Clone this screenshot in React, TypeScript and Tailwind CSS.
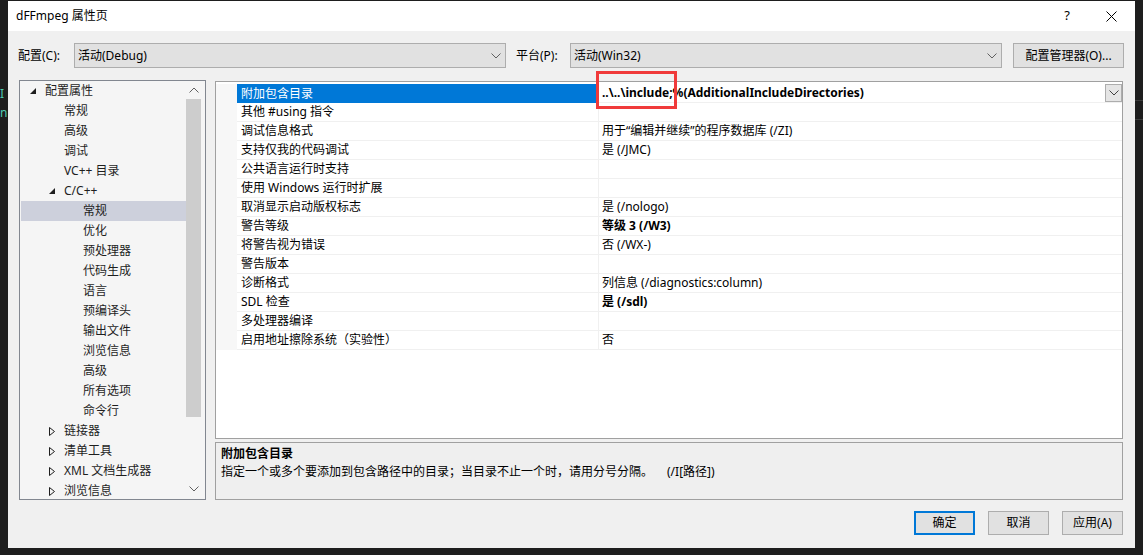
import React from "react";

const font = "font-['Noto_Sans','Noto_Sans_CJK_SC',sans-serif]";

type TreeItem = { t: string; lvl: 0 | 1 | 2; tri?: "open" | "closed"; sel?: boolean };

const tree: TreeItem[] = [
  { t: "配置属性", lvl: 0, tri: "open" },
  { t: "常规", lvl: 1 },
  { t: "高级", lvl: 1 },
  { t: "调试", lvl: 1 },
  { t: "VC++ 目录", lvl: 1 },
  { t: "C/C++", lvl: 1, tri: "open" },
  { t: "常规", lvl: 2, sel: true },
  { t: "优化", lvl: 2 },
  { t: "预处理器", lvl: 2 },
  { t: "代码生成", lvl: 2 },
  { t: "语言", lvl: 2 },
  { t: "预编译头", lvl: 2 },
  { t: "输出文件", lvl: 2 },
  { t: "浏览信息", lvl: 2 },
  { t: "高级", lvl: 2 },
  { t: "所有选项", lvl: 2 },
  { t: "命令行", lvl: 2 },
  { t: "链接器", lvl: 1, tri: "closed" },
  { t: "清单工具", lvl: 1, tri: "closed" },
  { t: "XML 文档生成器", lvl: 1, tri: "closed" },
  { t: "浏览信息", lvl: 1, tri: "closed" },
];

const indent = ["pl-[10px]", "pl-[29px]", "pl-[48px]"];

type Prop = { name: string; value: string; bold?: boolean; sel?: boolean };

const props: Prop[] = [
  { name: "附加包含目录", value: "..\\..\\include;%(AdditionalIncludeDirectories)", bold: true, sel: true },
  { name: "其他 #using 指令", value: "" },
  { name: "调试信息格式", value: "用于“编辑并继续”的程序数据库 (/ZI)" },
  { name: "支持仅我的代码调试", value: "是 (/JMC)" },
  { name: "公共语言运行时支持", value: "" },
  { name: "使用 Windows 运行时扩展", value: "" },
  { name: "取消显示启动版权标志", value: "是 (/nologo)" },
  { name: "警告等级", value: "等级 3 (/W3)", bold: true },
  { name: "将警告视为错误", value: "否 (/WX-)" },
  { name: "警告版本", value: "" },
  { name: "诊断格式", value: "列信息 (/diagnostics:column)" },
  { name: "SDL 检查", value: "是 (/sdl)", bold: true },
  { name: "多处理器编译", value: "" },
  { name: "启用地址擦除系统（实验性）", value: "否" },
];

const Chevron = ({ className = "" }: { className?: string }) => (
  <svg width="10" height="6" viewBox="0 0 10 6" className={className}>
    <path d="M0.5 0.5 L5 5 L9.5 0.5" fill="none" stroke="currentColor" strokeWidth="1" />
  </svg>
);

const Triangle = ({ kind }: { kind?: "open" | "closed" }) => {
  if (kind === "open")
    return (
      <svg width="6" height="6" viewBox="0 0 6 6">
        <path d="M6 0 L6 6 L0 6 Z" fill="#1e1e1e" />
      </svg>
    );
  if (kind === "closed")
    return (
      <svg width="6" height="9" viewBox="0 0 6 9">
        <path d="M0.5 0.5 L5.5 4.5 L0.5 8.5 Z" fill="none" stroke="#1e1e1e" strokeWidth="1" />
      </svg>
    );
  return null;
};

const Select = ({ text, w }: { text: string; w: string }) => (
  <div className={`${w} h-[25px] flex items-center justify-between bg-[#e1e1e1] border border-[#adadad] pl-[3px] pr-[4px]`}>
    <span className="text-[12px] text-black">{text}</span>
    <Chevron className="text-[#606060]" />
  </div>
);

const Button = ({ label, primary }: { label: string; primary?: boolean }) => (
  <div
    className={`w-[61px] h-[24px] flex items-center justify-center bg-[#e1e1e1] text-[12px] text-black ${
      primary ? "border-2 border-[#0078d7]" : "border border-[#adadad]"
    }`}
  >
    {label}
  </div>
);

export default function App() {
  return (
    <div className={`w-[1143px] h-[555px] bg-[#1e1e1e] flex overflow-hidden ${font}`}>
      {/* editor behind the dialog */}
      <div className="w-[8px] flex flex-col pt-[84px] text-[12px] leading-[19px] text-[#4ec9b0] overflow-hidden">
        <span>I</span>
        <span>n</span>
      </div>

      <div className="w-[1127px] h-[547px] mt-[1px] flex flex-col bg-[#f0f0f0] relative">
        {/* title bar */}
        <div className="h-[30px] bg-white flex items-center pl-[8px] pr-[18px]">
          <span className="text-[12px] text-black">dFFmpeg 属性页</span>
          <span className="ml-auto text-[13px] text-black mr-[36px]">?</span>
          <svg width="11" height="11" viewBox="0 0 11 11">
            <path d="M0.5 0.5 L10.5 10.5 M10.5 0.5 L0.5 10.5" stroke="#000" strokeWidth="1" />
          </svg>
        </div>

        {/* config row */}
        <div className="flex items-center mt-[12px] pl-[10px] h-[25px]">
          <span className="text-[12px] text-black w-[56px]">配置(C):</span>
          <Select text="活动(Debug)" w="w-[432px]" />
          <span className="text-[12px] text-black ml-[10px] w-[54px]">平台(P):</span>
          <Select text="活动(Win32)" w="w-[432px]" />
          <div className="ml-[11px] w-[111px] h-[25px] flex items-center justify-center bg-[#e1e1e1] border border-[#adadad] text-[12px] text-black">
            配置管理器(O)...
          </div>
        </div>

        {/* main area */}
        <div className="flex mt-[12px] pl-[11px] h-[421px]">
          {/* tree */}
          <div className="w-[187px] h-[420px] border border-[#828790] bg-[#f5f5f5] flex overflow-hidden">
            <div className="w-[166px] flex flex-col">
              {tree.map((it, i) => (
                <div
                  key={i}
                  className={`h-[20px] shrink-0 flex items-center ${indent[it.lvl]} ${
                    it.sel ? "bg-[#cdd0dc] ml-[1px]" : ""
                  }`}
                >
                  <div className={`${it.sel ? "w-[14px]" : "w-[15px]"} flex items-center`}>
                    <Triangle kind={it.tri} />
                  </div>
                  <span className="text-[12px] text-[#1e1e1e] whitespace-nowrap">{it.t}</span>
                </div>
              ))}
            </div>
            <div className="w-[15px] flex flex-col items-center">
              <div className="h-[18px] flex items-center justify-center text-[#606060]">
                <Chevron className="rotate-180" />
              </div>
              <div className="w-[15px] h-[318px] bg-[#cdcdcd]" />
              <div className="flex-1" />
              <div className="h-[18px] flex items-center justify-center text-[#606060] mb-[1px]">
                <Chevron />
              </div>
            </div>
          </div>

          {/* right column */}
          <div className="ml-[9px] w-[908px] flex flex-col">
            <div className="h-[358px] mt-[1px] border border-[#a0a0a0] bg-white pt-[2px]">
              {props.map((p, i) => (
                <div key={i} className="h-[19px] flex">
                  <div className="w-[21px] bg-[#f7f7f7]" />
                  <div
                    className={`w-[361px] flex items-center pl-[4px] text-[12px] whitespace-nowrap ${
                      p.sel ? "bg-[#0078d7] text-white" : "border-b border-[#f0f0f0] text-black"
                    }`}
                  >
                    {p.name}
                  </div>
                  <div className="flex-1 flex items-center border-l border-b border-[#f0f0f0] pl-[3px]">
                    <span className={`text-[12px] text-black whitespace-nowrap ${p.bold ? "font-bold" : ""}`}>
                      {p.value}
                    </span>
                    {p.sel && (
                      <div className="ml-auto w-[17px] h-[18px] bg-[#e5e5e5] border border-[#adadad] flex items-center justify-center text-[#404040]">
                        <Chevron />
                      </div>
                    )}
                  </div>
                </div>
              ))}
            </div>

            {/* description */}
            <div className="mt-[3px] h-[58px] border border-[#a0a0a0] bg-[#efefef] px-[5px] pt-[2px]">
              <div className="text-[12px] font-bold text-black leading-[18px]">附加包含目录</div>
              <div className="text-[12px] text-black leading-[18px] whitespace-nowrap">
                指定一个或多个要添加到包含路径中的目录；当目录不止一个时，请用分号分隔。
                <span className="ml-[14px]">(/I[路径])</span>
              </div>
            </div>
          </div>
        </div>

        {/* buttons */}
        <div className="flex justify-end gap-[13px] mt-[10px] pr-[12px]">
          <Button label="确定" primary />
          <Button label="取消" />
          <Button label="应用(A)" />
        </div>

        {/* red annotation box */}
        <div className="absolute left-[588px] top-[70px] w-[81px] h-[38px] border-[3px] border-[#f03a3a]" />
      </div>

      <div className="flex-1 flex flex-col">
        <div className="h-[100px]" />
        <div className="h-[1px] bg-[#3c3c3c]" />
        <div className="h-[18px]" />
        <div className="h-[1px] bg-[#3c3c3c]" />
      </div>
    </div>
  );
}
